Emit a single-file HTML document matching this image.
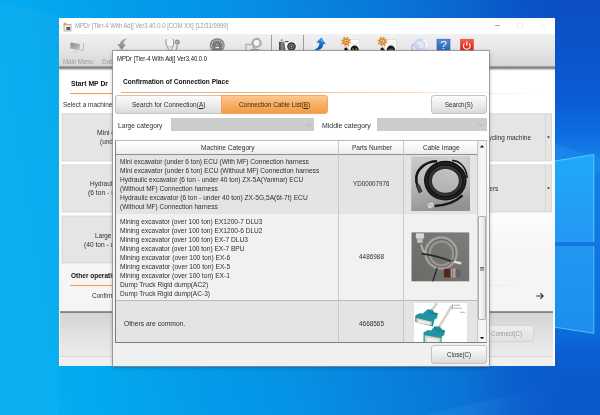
<!DOCTYPE html>
<html lang="en"><head><meta charset="utf-8"><title>MPDr</title>
<style>
html,body{margin:0;padding:0}
body{width:600px;height:415px;overflow:hidden;position:relative;font-family:"Liberation Sans",sans-serif;background:#0f86dc}
.a{position:absolute}
.tx{position:absolute;white-space:nowrap;line-height:10px;height:10px;transform-origin:0 50%;letter-spacing:0}
.mb{position:absolute;height:47.8px;box-sizing:border-box;background:#e5e5e4;border:.9px solid #d6d6d6}
.mb i{position:absolute;right:5.6px;top:0;bottom:0;width:.8px;background:#d2d2d2}
.mb b{position:absolute;right:1.4px;top:22.4px;width:0;height:0;border-left:1.6px solid transparent;border-right:1.6px solid transparent;border-top:2.2px solid #111}
.cb{height:12.5px;background:#ccc}
.cb svg{position:absolute;right:2.6px;top:4.4px}
#tl{position:absolute;left:0;top:0;width:600px;height:415px}
</style></head>
<body>
<svg class="a" style="left:0;top:0" width="600" height="415" viewBox="0 0 600 415">
<defs>
<linearGradient id="bg" gradientUnits="userSpaceOnUse" x1="0" y1="100" x2="600" y2="0">
<stop offset="0" stop-color="#02aef0"/><stop offset="0.14" stop-color="#03a5ed"/><stop offset="0.27" stop-color="#049ae9"/><stop offset="0.40" stop-color="#0592e5"/><stop offset="0.514" stop-color="#0885de"/><stop offset="0.645" stop-color="#0977d8"/><stop offset="0.757" stop-color="#0a68d0"/><stop offset="0.888" stop-color="#095bcb"/><stop offset="1" stop-color="#0a51c3"/>
</linearGradient>
<linearGradient id="rs" x1="0" y1="0" x2="0" y2="1">
<stop offset="0" stop-color="#0b4fc3"/><stop offset="0.041" stop-color="#0b50c4"/><stop offset="0.142" stop-color="#0c54cc"/><stop offset="0.243" stop-color="#0c5cd6"/><stop offset="0.319" stop-color="#0c6ce0"/><stop offset="0.378" stop-color="#1580e6"/><stop offset="0.80" stop-color="#0c6cdc"/><stop offset="0.842" stop-color="#0a60d4"/><stop offset="0.9" stop-color="#0b5acc"/><stop offset="1" stop-color="#0b58ca"/>
</linearGradient>
<linearGradient id="mh" gradientUnits="userSpaceOnUse" x1="470" y1="0" x2="556" y2="0"><stop offset="0" stop-color="#000"/><stop offset="1" stop-color="#fff"/></linearGradient>
<mask id="mk" maskUnits="userSpaceOnUse" x="0" y="0" width="600" height="415"><rect x="470" y="0" width="130" height="415" fill="url(#mh)"/></mask>
<linearGradient id="p1" x1="0" y1="0" x2="0" y2="1"><stop offset="0" stop-color="#1fa9f8"/><stop offset="1" stop-color="#2498f4"/></linearGradient>
<linearGradient id="p2" x1="0" y1="0" x2="0" y2="1"><stop offset="0" stop-color="#2297f2"/><stop offset="1" stop-color="#1d8eec"/></linearGradient>
</defs>
<rect width="600" height="415" fill="url(#bg)"/>
<polygon points="0,2 59,16 59,415 0,415" fill="#fff" opacity=".035"/>
<polygon points="425,415 600,374 600,415" fill="#3a90e8" opacity=".22"/>
<rect x="470" y="0" width="130" height="415" fill="url(#rs)" mask="url(#mk)"/>
<polygon points="554,143.2 600,158.6 600,172 594,172 594,154.5 554,161" fill="#1e8aec" opacity=".55"/>
<polygon points="555,161 593.8,154.5 593.8,242.2 555,242.2" fill="url(#p1)"/>
<polygon points="555,246 593.8,246 593.8,333.3 555,327.2" fill="url(#p2)"/>
<polyline points="555,161 593.8,154.5 593.8,242" fill="none" stroke="#55cdfc" stroke-width="1"/>
<polyline points="593.8,246 593.8,333.3 555,327.2" fill="none" stroke="#48c4f8" stroke-width="1"/>
</svg>
<div class="a" id="win" style="left:59px;top:18px;width:496px;height:348px;background:#fff;overflow:hidden">
 <div class="a" style="left:0;top:16px;width:496px;height:32.6px;background:linear-gradient(#f1f1f1 0,#e6e6e6 45%,#d5d5d5 100%)"></div>
 <div class="a" style="left:0;top:48.4px;width:496px;height:4.2px;background:linear-gradient(#b9b9b9 0,#848484 22%,#808080 42%,#b8b8b8 62%,#ececec 82%,#fff 100%)"></div>
 <div class="a" style="left:0;top:52.6px;width:496px;height:240.7px;background:linear-gradient(#fff 0,#fff 55%,#f6f6f6 75%,#f5f5f5 100%)"></div>
 <!-- heading lines -->
 <div class="a" style="left:11px;top:74.6px;width:470px;height:1.4px;background:linear-gradient(90deg,#f79646 0,#f9a55f 40%,#fde3cc 85%,rgba(255,255,255,0) 100%)"></div>
 <div class="a" style="left:11px;top:266.6px;width:470px;height:1.4px;background:linear-gradient(90deg,#f79646 0,#f9a55f 40%,#fde3cc 85%,rgba(255,255,255,0) 100%)"></div>
 <!-- machine buttons -->
 <svg class="a" style="left:0;top:0" width="496" height="348" viewBox="59 18 496 348">
 <g fill="#e5e5e4" stroke="#d5d5d5" stroke-width=".9">
 <rect x="62.2" y="113.8" width="242" height="47.1"/><rect x="62.2" y="164.9" width="242" height="47"/><rect x="62.2" y="216.1" width="242" height="46.8"/>
 <rect x="307" y="113.8" width="244.4" height="47.1"/><rect x="307" y="164.9" width="244.4" height="47"/>
 </g>
 <path d="M545.5 114V161M545.5 165V212" stroke="#d2d2d2" stroke-width=".8"/>
 <path d="M547.1 136.4H549.9L548.5 138.2ZM547.1 187.4H549.9L548.5 189.2Z" fill="#111"/>
 </svg>
 <!-- arrow -->
 <svg class="a" style="left:476px;top:273px" width="10" height="10" viewBox="0 0 10 10"><path d="M1.2 5H8M5.3 2.2L8.2 5L5.3 7.8" fill="none" stroke="#333" stroke-width="1.1"/></svg>
 <!-- bottom panel -->
 <div class="a" style="left:1px;top:292.6px;width:493.3px;height:2.2px;background:linear-gradient(#9a9a9a,#7c7c7c)"></div>
 <div class="a" style="left:1px;top:294.8px;width:493.3px;height:43.6px;background:linear-gradient(#d4d4d4 0,#e0e0e0 45%,#ebebeb 100%)"></div>
 <div class="a" style="left:1px;top:338.4px;width:493.3px;height:9.6px;background:#f0f0f0;border-top:0.8px solid #d8d8d8"></div>
 <!-- connect button -->
 <div class="a" style="left:425px;top:307px;width:50px;height:17px;border:0.8px solid #d4d4d4;border-radius:2.5px;background:linear-gradient(#eeeeee,#e0e0e0);box-sizing:border-box"></div>
 
 <!-- title icon -->
 <svg class="a" style="left:4px;top:3.5px" width="9" height="10" viewBox="0 0 9 10"><rect x="1" y="2.5" width="7" height="6.5" fill="#e9e9e9" stroke="#9a9a9a" stroke-width=".7"/><rect x="3.5" y="5" width="3.5" height="3" fill="#555"/><circle cx="2" cy="2" r="1.6" fill="#e8a050"/></svg>
 <!-- window controls -->
 <div class="a" style="left:435.7px;top:7.2px;width:5.6px;height:1px;background:#a6a6a6"></div>
 <div class="a" style="left:458px;top:4.7px;width:5.6px;height:5px;border:.8px solid #efefef;box-sizing:border-box"></div>
 <svg class="a" style="left:481px;top:4px" width="7" height="7" viewBox="0 0 7 7"><path d="M.8 .8L6.2 6.2M6.2 .8L.8 6.2" stroke="#eee" stroke-width=".8"/></svg>
 <!-- separators -->
 <div class="a" style="left:212px;top:17px;width:1px;height:31px;background:#9d9d9d"></div>
 <div class="a" style="left:244.3px;top:17px;width:1px;height:31px;background:#9d9d9d"></div>
 
<svg class="a" style="left:0;top:0" width="496" height="50" viewBox="59 18 496 50">
<defs>
<linearGradient id="gmon" x1="0" y1="0" x2="1" y2="1"><stop offset="0" stop-color="#777"/><stop offset="1" stop-color="#c4c4c4"/></linearGradient>
<linearGradient id="garr" x1="0" y1="0" x2="0" y2="1"><stop offset="0" stop-color="#b4b4b4"/><stop offset="1" stop-color="#808080"/></linearGradient>
<linearGradient id="gblu" x1="0" y1="0" x2="0" y2="1"><stop offset="0" stop-color="#2a8ee8"/><stop offset="1" stop-color="#0a4cb0"/></linearGradient>
<linearGradient id="gq" x1="0" y1="0" x2="0" y2="1"><stop offset="0" stop-color="#5a8fd6"/><stop offset=".5" stop-color="#3a76c4"/><stop offset="1" stop-color="#2f68b6"/></linearGradient>
<linearGradient id="gr" x1="0" y1="0" x2="0" y2="1"><stop offset="0" stop-color="#f3634c"/><stop offset=".5" stop-color="#ea3420"/><stop offset="1" stop-color="#de2412"/></linearGradient>
<linearGradient id="ggrip" x1="0" y1="0" x2="1" y2="0"><stop offset="0" stop-color="#3c3c3c"/><stop offset=".5" stop-color="#8a8a8a"/><stop offset="1" stop-color="#4a4a4a"/></linearGradient>
</defs>
<!-- main menu icon -->
<g opacity=".85">
<polygon points="70.6,42.6 79.9,44 79.6,50.4 70.3,48.6" fill="url(#gmon)"/>
<path d="M72.2 51.6L78.4 52.6" stroke="#d4d4d4" stroke-width="1.2"/>
<path d="M75.4 50L75.6 52" stroke="#cfcfcf" stroke-width="1.4"/>
<rect x="81.3" y="38" width="4.3" height="5.2" rx="1.5" fill="#f6f6f6" stroke="#cdcdcd" stroke-width=".5"/>
<path d="M83.6 43.2V49.4Q83.6 50.9 82 50.6L80 49.9" stroke="#ababab" fill="none" stroke-width=".9"/>
</g>
<!-- data download arrow -->
<path d="M127.7 38.2C122.6 38.6 120.2 41 119.8 44.3L117.1 44.1L121.6 49.8L126.1 44.6L123.5 44.5C123.7 42 125 39.8 127.7 38.2Z" fill="url(#garr)"/>
<path d="M116 50.2H128" stroke="#a0a0a0" stroke-width=".6"/>
<!-- stethoscope -->
<path d="M166.6 39C165 42.6 166.6 46.6 169.4 50.4L170.6 50.4C173.4 46.6 174.6 42.6 173 39" fill="#f5f5f5" stroke="#7e7e7e" stroke-width=".9"/>
<path d="M168 46.8L171.8 46.8" stroke="#999" stroke-width=".7"/>
<circle cx="177.3" cy="42.1" r="2.5" fill="#909090"/><circle cx="177.3" cy="42.1" r="1.1" fill="#c4c4c4"/>
<path d="M177.2 44.6L176.6 49.4L175.2 50.4" stroke="#808080" stroke-width=".9" fill="none"/>
<!-- gauge -->
<circle cx="217.2" cy="45.6" r="7.4" fill="#7a7a7a"/>
<path d="M212.2 48.6A5.7 5.7 0 1 1 222.2 48.6" fill="none" stroke="#e4e4e4" stroke-width="1.5" stroke-dasharray=".9 1.1"/>
<rect x="215.4" y="47" width="3.6" height="1.2" fill="#eee"/>
<path d="M216.4 43.8L217.6 45.6" stroke="#ddd" stroke-width=".8"/>
<!-- gear hook -->
<circle cx="256.6" cy="42.9" r="3.9" fill="none" stroke="#a9a9a9" stroke-width="2"/>
<circle cx="256.6" cy="42.9" r="4.9" fill="none" stroke="#b0b0b0" stroke-width=".9" stroke-dasharray=".9 .9"/>
<circle cx="256.6" cy="42.9" r="2.8" fill="#f4f4f4"/>
<path d="M246 50.4V44.6H252.4" fill="none" stroke="#b2b2b2" stroke-width="1.5"/>
<path d="M250.5 49.7H259.5" stroke="#8a8a8a" stroke-width="1.4" opacity=".8"/>
<path d="M252.6 46.4L255 49" stroke="#aaa" stroke-width="1.6"/>
<!-- camera -->
<rect x="284.6" y="40.9" width="12.4" height="9.8" fill="#f8f8f8" stroke="#dcdcdc" stroke-width=".5"/>
<polygon points="279,41.8 284.2,41.8 285.6,50.6 279,50.6" fill="url(#ggrip)"/>
<circle cx="291.5" cy="46.5" r="4.3" fill="#352d2d"/>
<circle cx="291.5" cy="46.5" r="2.5" fill="none" stroke="#8d8888" stroke-width="1"/>
<circle cx="291.5" cy="46.5" r="1" fill="#b8b4b4"/>
<rect x="285.2" y="41" width="2.8" height="1.2" fill="#4a4a4a"/>
<circle cx="288.6" cy="41.5" r=".6" fill="#49c0c0"/>
<circle cx="281.7" cy="40.1" r=".9" fill="#3f86d8"/>
<!-- blue arrow -->
<path d="M312.4 43.2Q313.8 41.6 315.8 42.6L315.6 46.4Q313.2 47.4 312.4 43.2Z" fill="#f6f6f6" opacity=".8"/>
<path d="M313.6 50.4C317.4 48.8 319.3 46.6 319.4 43L316.4 42.6L321.4 37.6L325.8 44.3L323.3 43.7C323.3 47.8 320.6 50.4 313.6 50.4Z" fill="url(#gblu)"/>
<path d="M321.3 39.6L322.6 42.2" stroke="#cfe6fb" stroke-width=".7"/>
<!-- orange gear icons -->
<g>
<rect x="348.4" y="39.6" width="11.4" height="11" fill="#fbfbfb" stroke="#cfcfcf" stroke-width=".5"/>
<path d="M351.5 43.6L354.6 45.2L358 42.8" stroke="#e4e4e4" stroke-width="1.2" fill="none"/>
<circle cx="346.1" cy="41.6" r="3.5" fill="#e28b2e"/>
<circle cx="346.1" cy="41.6" r="4.2" fill="none" stroke="#e6913e" stroke-width="1.5" stroke-dasharray="1.7 1.6"/>
<circle cx="346.1" cy="41.5" r="1.45" fill="#ececec"/><circle cx="346.1" cy="41.6" r=".75" fill="#3a3a3a"/>
<path d="M344.3 50.7V48.4L346.2 47.2L349 50.7Z" fill="#1c1412"/>
<path d="M350.4 50.7C350.4 47.2 352.4 45.6 354.6 45.6C356.8 45.6 358.8 47.2 358.8 50.7Z" fill="#15181c"/>
</g>
<path d="M352.6 48L353.6 50.4M356.6 48L355.6 50.4" stroke="#e8902c" stroke-width=".9"/>
<g transform="translate(36.3 0)">
<rect x="348.4" y="39.6" width="11.4" height="11" fill="#fbfbfb" stroke="#cfcfcf" stroke-width=".5"/>
<path d="M351.5 43.6L354.6 45.2L358 42.8" stroke="#e4e4e4" stroke-width="1.2" fill="none"/>
<circle cx="346.1" cy="41.6" r="3.5" fill="#e28b2e"/>
<circle cx="346.1" cy="41.6" r="4.2" fill="none" stroke="#e6913e" stroke-width="1.5" stroke-dasharray="1.7 1.6"/>
<circle cx="346.1" cy="41.5" r="1.45" fill="#ececec"/><circle cx="346.1" cy="41.6" r=".75" fill="#3a3a3a"/>
<path d="M344.3 50.7V48.4L346.2 47.2L349 50.7Z" fill="#1c1412"/>
<path d="M350.4 50.7C350.4 47.2 352.4 45.6 354.6 45.6C356.8 45.6 358.8 47.2 358.8 50.7Z" fill="#15181c"/>
</g>
<path d="M389.2 48.6L390 50.2M391 48.2V50.2M392.8 48.6L392 50.2" stroke="#4aa0d8" stroke-width=".7"/>
<!-- pale gears -->
<circle cx="415.4" cy="47.4" r="3.4" fill="none" stroke="#b7a6dc" stroke-width="1.3" opacity=".85"/>
<circle cx="420.3" cy="44.7" r="5" fill="#e6e8ee" stroke="#c4d5f2" stroke-width="2.6"/>
<circle cx="420.3" cy="44.7" r="6.5" fill="none" stroke="#d2e0f8" stroke-width="1.1" stroke-dasharray="1.2 1.1"/>
<path d="M423 39.4A5.8 5.8 0 0 1 425.8 47.4" fill="none" stroke="#fff" stroke-width="1.6"/>
<path d="M416.6 50.4A3.6 3.6 0 0 0 417.4 44.6" fill="none" stroke="#b7a6dc" stroke-width="1" opacity=".7"/>
<!-- help -->
<rect x="437" y="39.2" width="13" height="11.6" fill="url(#gq)" stroke="#2c5ea8" stroke-width=".6"/>
<!-- power -->
<rect x="460.3" y="39.2" width="13.1" height="11.6" fill="url(#gr)" stroke="#d8412c" stroke-width=".5"/>
<path d="M464.6 43.3A3.4 3.4 0 1 0 469 43.3" fill="none" stroke="#fff" stroke-width="1.1"/>
<path d="M466.8 41.2V45.8" stroke="#fff" stroke-width="1.1"/>
</svg>
<span class="a" style="left:378px;top:20.6px;width:13px;height:12px;line-height:12px;text-align:center;font-size:11.5px;font-weight:normal;color:#fff">?</span>


</div>

<div id="tl">
<span class="tx" style="left:75.0px;top:20.8px;font-size:7.2px;font-weight:normal;color:#9a9a9a;transform:scaleX(0.8229)">MPDr [Tier-4 With Adj] Ver3.40.0.0 [COM XX] [12/31/9999]</span>
<span class="tx" style="left:62.6px;top:57.0px;font-size:7.2px;font-weight:normal;color:#9c9c9c;transform:scaleX(0.8436)">Main Menu</span>
<span class="tx" style="left:71.0px;top:78.5px;font-size:7.4px;font-weight:bold;color:#111;transform:scaleX(0.9221)">Start MP Dr</span>
<span class="tx" style="left:71.4px;top:270.6px;font-size:7.4px;font-weight:bold;color:#111;transform:scaleX(0.8839)">Other operation</span>
<span class="tx" style="left:102.0px;top:57.0px;font-size:7.2px;font-weight:normal;color:#9c9c9c;transform:scaleX(0.9000)">Data Download</span>
<span class="tx" style="left:63.0px;top:100.2px;font-size:7.4px;font-weight:normal;color:#2e2e2e;transform:scaleX(0.8700)">Select a machine type</span>
<span class="tx" style="left:97.0px;top:128.1px;font-size:7.4px;font-weight:normal;color:#2e2e2e;transform:scaleX(0.9200)">Mini excavator</span>
<span class="tx" style="left:100.3px;top:137.1px;font-size:7.4px;font-weight:normal;color:#2e2e2e;transform:scaleX(0.8700)">(under 6 ton)</span>
<span class="tx" style="left:90.0px;top:179.1px;font-size:7.4px;font-weight:normal;color:#2e2e2e;transform:scaleX(0.8700)">Hydraulic excavator</span>
<span class="tx" style="left:87.7px;top:188.1px;font-size:7.4px;font-weight:normal;color:#2e2e2e;transform:scaleX(0.9100)">(6 ton - under 40 ton)</span>
<span class="tx" style="left:95.0px;top:231.0px;font-size:7.4px;font-weight:normal;color:#2e2e2e;transform:scaleX(0.8700)">Large excavator</span>
<span class="tx" style="left:84.0px;top:240.0px;font-size:7.4px;font-weight:normal;color:#2e2e2e;transform:scaleX(0.9000)">(40 ton - under 100 ton)</span>
<span class="tx" style="left:92.3px;top:291.2px;font-size:7.4px;font-weight:normal;color:#2e2e2e;transform:scaleX(0.8500)">Confirmation of Connection Place</span>
<span class="tx" style="left:476.5px;top:133.1px;font-size:7.4px;font-weight:normal;color:#2e2e2e;transform:scaleX(0.8700)">Recycling machine</span>
<span class="tx" style="left:478.7px;top:183.9px;font-size:7.4px;font-weight:normal;color:#2e2e2e;transform:scaleX(0.8700)">Others</span>
<span class="tx" style="left:491.0px;top:328.5px;font-size:7.4px;font-weight:normal;color:#9a9a9a;transform:scaleX(0.8202)">Connect(C)</span>
</div>

<div class="a" id="dlg" style="left:112.5px;top:50.5px;width:376.8px;height:315.5px;background:#fff;box-shadow:0 0 0 .8px #8f8f8f,0 1px 4px rgba(0,0,0,.35);overflow:hidden">
 <div class="a" style="left:0;top:80px;width:377px;height:236px;background:linear-gradient(#fff,#f0f0f0 88%)"></div>
 <div class="a" style="left:8.6px;top:41.2px;width:368px;height:1.3px;background:linear-gradient(90deg,#f9a464 0,#f9ad72 35%,#fcd3b2 70%,#fef1e6 100%)"></div>
 <!-- tabs -->
 <div class="a" style="left:2.5px;top:44.8px;width:106.5px;height:18.3px;box-sizing:border-box;border:.9px solid #c4c4c4;border-right:0;border-radius:3px 0 0 3px;background:linear-gradient(#fbfbfb 0,#efefef 45%,#dadada 100%)"></div>
 <div class="a" style="left:108.6px;top:44.8px;width:106.6px;height:18.3px;box-sizing:border-box;border:.9px solid #f0a860;border-radius:0 3px 3px 0;background:linear-gradient(#fcc990 0,#f9b068 45%,#f39c44 100%)"></div>
 <div class="a" style="left:318.6px;top:44.8px;width:55.6px;height:18.3px;box-sizing:border-box;border:.9px solid #c4c4c4;border-radius:3px;background:linear-gradient(#fbfbfb 0,#efefef 45%,#dadada 100%)"></div>
 <!-- underline accel -->
 <!-- combos -->
 <div class="a cb" style="left:58.4px;top:67.7px;width:143.6px"><svg width="6" height="4" viewBox="0 0 6 4"><path d="M.5 .6L3 3.1L5.5 .6" fill="none" stroke="#b0b0b0" stroke-width=".8"/></svg></div>
 <div class="a cb" style="left:264.3px;top:67.7px;width:110px"><svg width="6" height="4" viewBox="0 0 6 4"><path d="M.5 .6L3 3.1L5.5 .6" fill="none" stroke="#b0b0b0" stroke-width=".8"/></svg></div>
 <!-- table -->
 <div class="a" id="tbl" style="left:2.5px;top:89.6px;width:372px;height:202.7px;box-sizing:border-box;border:.9px solid #7e7e7e;border-top-color:#b9b9b9;border-right-color:#c4c4c4;background:#f1f1f1;overflow:hidden">
  <div class="a" style="left:0;top:0;width:361px;height:13px;background:linear-gradient(#fff,#f8f8f8 45%,#ececec)"></div>
  <div class="a" style="left:0;top:13px;width:361px;height:.8px;background:#8e8e8e"></div>
  <div class="a" style="left:0;top:13.8px;width:361px;height:58.7px;background:#e4e4e3"></div>
  <div class="a" style="left:0;top:72.5px;width:361px;height:.8px;background:#c6c6c6"></div>
  <div class="a" style="left:0;top:73.3px;width:361px;height:85.7px;background:#f1f1f1"></div>
  <div class="a" style="left:0;top:159px;width:361px;height:.8px;background:#b9b9b9"></div>
  <div class="a" style="left:0;top:159.8px;width:361px;height:42px;background:#e4e4e3"></div>
  <div class="a" style="left:222.2px;top:0;width:.8px;height:202px;background:#c9c9c9"></div>
  <div class="a" style="left:287.2px;top:0;width:.8px;height:202px;background:#c9c9c9"></div>
  <div class="a" style="left:360.8px;top:0;width:.8px;height:202px;background:#c9c9c9"></div>
  <!-- scrollbar -->
  <div class="a" style="left:361.6px;top:0;width:8.8px;height:202px;background:linear-gradient(90deg,#ededed,#f6f6f6 40%,#f4f4f4)"></div>
  <div class="a" style="left:362.4px;top:74.6px;width:7.4px;height:104.6px;box-sizing:border-box;border:.8px solid #adadad;border-radius:1.2px;background:linear-gradient(90deg,#fbfbfb,#e2e2e2)"></div>
  <div class="a" style="left:364.4px;top:125.6px;width:3.2px;height:.7px;background:#777;box-shadow:0 1.3px 0 #777,0 2.6px 0 #777"></div>
  <svg class="a" style="left:363.9px;top:4.2px" width="4" height="2.6" viewBox="0 0 4 2.6"><path d="M0 2.6L2 0L4 2.6Z" fill="#111"/></svg>
  <svg class="a" style="left:363.9px;top:195.8px" width="4" height="2.6" viewBox="0 0 4 2.6"><path d="M0 0L2 2.6L4 0Z" fill="#111"/></svg>
  
<svg class="a" style="left:0;top:0" width="361" height="201" viewBox="115.9 141.0 361 201">
<defs>
<linearGradient id="ph1" x1="0" y1="0" x2=".35" y2="1"><stop offset="0" stop-color="#cbcbcb"/><stop offset=".5" stop-color="#b7b7b7"/><stop offset="1" stop-color="#929292"/></linearGradient>
<radialGradient id="ph1b" cx=".75" cy=".2" r=".7"><stop offset="0" stop-color="#dcdcdc" stop-opacity=".9"/><stop offset="1" stop-color="#c0c0c0" stop-opacity="0"/></radialGradient>
<linearGradient id="ph2" x1="0" y1="1" x2="1" y2="0"><stop offset="0" stop-color="#696a66"/><stop offset="1" stop-color="#7d7e7a"/></linearGradient>
<clipPath id="c1"><rect x="411" y="156.3" width="59" height="54.8"/></clipPath>
<clipPath id="c2"><rect x="411.2" y="232.2" width="58.2" height="49.4"/></clipPath>
<clipPath id="c3"><rect x="413.8" y="303" width="53" height="40"/></clipPath>
<filter id="bl" x="-5%" y="-5%" width="110%" height="110%"><feGaussianBlur stdDeviation=".45"/></filter>
<filter id="bl2" x="-5%" y="-5%" width="110%" height="110%"><feGaussianBlur stdDeviation=".35"/></filter>
</defs>
<!-- photo 1 -->
<g clip-path="url(#c1)">
<rect x="411" y="156.3" width="59" height="54.8" fill="url(#ph1)"/>
<rect x="411" y="156.3" width="59" height="54.8" fill="url(#ph1b)"/>
<g filter="url(#bl)">
<ellipse cx="445.2" cy="180.6" rx="18.6" ry="17.1" fill="none" stroke="#161616" stroke-width="5.4"/>
<ellipse cx="445.3" cy="180.9" rx="15" ry="13.4" fill="none" stroke="#2e2e2e" stroke-width="3.2"/>
<ellipse cx="445.4" cy="181.2" rx="12.6" ry="11" fill="#b5b5b5" opacity=".55"/>
<path d="M437 161.2C427 161 417.4 168 416.2 177C415.8 181 416.4 183.6 417.6 186" fill="none" stroke="#161616" stroke-width="2.6"/>
<path d="M452 160.6C460 160.4 466.6 168 467 178" fill="none" stroke="#1c1c1c" stroke-width="1.6"/>
<polygon points="415.6,186 419.4,184.6 422.4,191.6 418.8,193.4" fill="#3c3c3c"/>
<path d="M462.4 195.4C456 201.4 447 205.4 434.4 206" fill="none" stroke="#151515" stroke-width="2.4"/>
<polygon points="427.2,203.4 432.6,202.6 434.2,206.8 428.6,208.4" fill="#d8d8d8"/>
<path d="M428 204L433.4 207" stroke="#8a8a8a" stroke-width=".7"/>
<ellipse cx="445.2" cy="180.7" rx="16.2" ry="14.6" fill="none" stroke="#4a4a4a" stroke-width=".6" opacity=".8"/>
<ellipse cx="445.3" cy="180.9" rx="19" ry="17.6" fill="none" stroke="#484848" stroke-width=".6" opacity=".7"/>
</g>
</g>
<!-- photo 2 -->
<g clip-path="url(#c2)">
<rect x="411.2" y="232.2" width="58.2" height="49.4" fill="url(#ph2)"/>
<g filter="url(#bl2)">
<ellipse cx="441" cy="253" rx="15.4" ry="15.4" fill="none" stroke="#a2a39f" stroke-width="2.6"/>
<ellipse cx="441.4" cy="253.4" rx="11.8" ry="12" fill="none" stroke="#959692" stroke-width="2.4"/>
<ellipse cx="441.2" cy="253.2" rx="13.9" ry="14" fill="none" stroke="#5a5b58" stroke-width=".7"/>
<path d="M421 244.4C421.6 248 422.6 250.6 425 253" fill="none" stroke="#b4b5b1" stroke-width="1.8"/>
<rect x="415.8" y="233.4" width="8" height="5" fill="#dcdcda"/>
<rect x="417" y="238.4" width="5.6" height="4.4" fill="#c2c2bf"/>
<path d="M415.4 236.4H424.4" stroke="#c6c6c2" stroke-width=".6"/>
<path d="M421.6 253.6C430 255 441 256.6 450.8 261.4" fill="none" stroke="#262626" stroke-width="1.9"/>
<path d="M446 258.6L455 261.4" stroke="#6a4a44" stroke-width="1"/>
<polygon points="454,260.4 461.4,262.2 460.8,264.6 453.6,262.8" fill="#e4e4e2"/>
<path d="M437.2 267.6L432.6 281.6" stroke="#161616" stroke-width="1.1"/>
<rect x="443.8" y="268.8" width="7" height="8.6" rx="1.2" fill="#58261f"/>
<rect x="450.6" y="268.6" width="5" height="9" rx="1.6" fill="#b3a59d"/>
<rect x="455.4" y="269.4" width="5.2" height="7.6" rx="2" fill="#62606e"/>
<path d="M447 269.6V277M452.6 269V277.2" stroke="#40201c" stroke-width=".6" opacity=".7"/>
</g>
</g>
<!-- photo 3 -->
<g clip-path="url(#c3)">
<rect x="413.8" y="303" width="53" height="40" fill="#fff"/>
<g filter="url(#bl2)">
<path d="M431.6 310.4L437 303" stroke="#d7d1c4" stroke-width="2.6"/>
<path d="M439.4 326L451.8 306" stroke="#d9d3c6" stroke-width="2.6"/>
<polygon points="415.2,315.6 419.4,313.2 422.6,313.6 427.4,309.4 431.8,309.4 434.6,312.6 437.8,313.2 436.8,318.2 434.4,319.6 432.8,326.6 415.2,322" fill="#2493a0"/>
<polygon points="416.3,318 431.8,321.8 431.3,325.6 416.3,322.8" fill="#d6d0c0"/>
<polygon points="418.2,319.8 429.6,322.6 429.4,324.6 418.2,322.4" fill="#f2efe6"/>
<path d="M427.4 309.8L431.6 313.6L437.6 314" stroke="#136c78" stroke-width=".8" fill="none"/>
<polygon points="423.4,332.4 427.8,330 431,330.4 434.2,326.6 439.6,326.2 442,329.6 445,330.4 444,335.2 441.8,336.6 441.2,343 423.4,343" fill="#2493a0"/>
<polygon points="424.6,335.2 440.6,338 440.2,343 424.6,343" fill="#d6d0c0"/>
<polygon points="426.6,337.2 438.6,339.4 438.4,343 426.6,343" fill="#f2efe6"/>
<path d="M434 327L438.4 331L444.4 331.4" stroke="#136c78" stroke-width=".8" fill="none"/>
<rect x="452" y="304.2" width=".7" height="5" fill="#5a80d2"/>
<path d="M453.6 305.2H460M453.6 308.2H461.6M460.2 312.3H464.8" stroke="#9a9a9a" stroke-width=".8"/>
</g>
</g>
</svg>

 </div>
 <!-- close -->
 <div class="a" style="left:318.6px;top:294.9px;width:55.6px;height:18.3px;box-sizing:border-box;border:.9px solid #c4c4c4;border-radius:3px;background:linear-gradient(#fbfbfb 0,#efefef 45%,#dadada 100%)"></div>
</div>

<div id="tl2" class="a" style="left:0;top:0">
<span class="tx" style="left:116.6px;top:53.8px;font-size:7.2px;font-weight:normal;color:#111;transform:scaleX(0.8183)">MPDr [Tier-4 With Adj] Ver3.40.0.0</span>
<span class="tx" style="left:122.8px;top:77.4px;font-size:7.4px;font-weight:bold;color:#111;transform:scaleX(0.8885)">Confirmation of Connection Place</span>
<span class="tx" style="left:131.6px;top:100.2px;font-size:7.4px;font-weight:normal;color:#2e2e2e;transform:scaleX(0.8802)">Search for Connection(<u>A</u>)</span>
<span class="tx" style="left:238.8px;top:100.2px;font-size:7.4px;font-weight:normal;color:#3a2a10;transform:scaleX(0.8665)">Connection Cable List(<u>B</u>)</span>
<span class="tx" style="left:445.0px;top:100.2px;font-size:7.4px;font-weight:normal;color:#2e2e2e;transform:scaleX(0.8323)">Search(S)</span>
<span class="tx" style="left:117.8px;top:121.1px;font-size:7.4px;font-weight:normal;color:#2e2e2e;transform:scaleX(0.9004)">Large category</span>
<span class="tx" style="left:321.8px;top:121.1px;font-size:7.4px;font-weight:normal;color:#2e2e2e;transform:scaleX(0.9354)">Middle category</span>
<span class="tx" style="left:200.9px;top:143.4px;font-size:7.4px;font-weight:normal;color:#2e2e2e;transform:scaleX(0.8936)">Machine Category</span>
<span class="tx" style="left:351.7px;top:143.4px;font-size:7.4px;font-weight:normal;color:#2e2e2e;transform:scaleX(0.8795)">Parts Number</span>
<span class="tx" style="left:422.5px;top:143.4px;font-size:7.4px;font-weight:normal;color:#2e2e2e;transform:scaleX(0.8710)">Cable Image</span>
<span class="tx" style="left:119.7px;top:156.5px;font-size:7.4px;font-weight:normal;color:#2e2e2e;transform:scaleX(0.8912)">Mini excavator (under 6 ton) ECU (With MF) Connection harness</span>
<span class="tx" style="left:119.7px;top:165.5px;font-size:7.4px;font-weight:normal;color:#2e2e2e;transform:scaleX(0.8964)">Mini excavator (under 6 ton) ECU (Without MF) Connection harness</span>
<span class="tx" style="left:119.7px;top:174.5px;font-size:7.4px;font-weight:normal;color:#2e2e2e;transform:scaleX(0.8833)">Hydraulic excavator (6 ton - under 40 ton) ZX-5A(Yanmar) ECU</span>
<span class="tx" style="left:119.7px;top:183.6px;font-size:7.4px;font-weight:normal;color:#2e2e2e;transform:scaleX(0.8842)">(Without MF) Connection harness</span>
<span class="tx" style="left:119.7px;top:192.6px;font-size:7.4px;font-weight:normal;color:#2e2e2e;transform:scaleX(0.8995)">Hydraulic excavator (6 ton - under 40 ton) ZX-5G,5A(6t-7t) ECU</span>
<span class="tx" style="left:119.7px;top:201.6px;font-size:7.4px;font-weight:normal;color:#2e2e2e;transform:scaleX(0.8842)">(Without MF) Connection harness</span>
<span class="tx" style="left:119.7px;top:216.7px;font-size:7.4px;font-weight:normal;color:#2e2e2e;transform:scaleX(0.8917)">Mining excavator (over 100 ton) EX1200-7 DLU3</span>
<span class="tx" style="left:119.7px;top:225.7px;font-size:7.4px;font-weight:normal;color:#2e2e2e;transform:scaleX(0.8917)">Mining excavator (over 100 ton) EX1200-6 DLU2</span>
<span class="tx" style="left:119.7px;top:234.8px;font-size:7.4px;font-weight:normal;color:#2e2e2e;transform:scaleX(0.8921)">Mining excavator (over 100 ton) EX-7 DLU3</span>
<span class="tx" style="left:119.7px;top:243.8px;font-size:7.4px;font-weight:normal;color:#2e2e2e;transform:scaleX(0.8914)">Mining excavator (over 100 ton) EX-7 BPU</span>
<span class="tx" style="left:119.7px;top:252.9px;font-size:7.4px;font-weight:normal;color:#2e2e2e;transform:scaleX(0.9010)">Mining excavator (over 100 ton) EX-6</span>
<span class="tx" style="left:119.7px;top:261.9px;font-size:7.4px;font-weight:normal;color:#2e2e2e;transform:scaleX(0.9010)">Mining excavator (over 100 ton) EX-5</span>
<span class="tx" style="left:119.7px;top:270.9px;font-size:7.4px;font-weight:normal;color:#2e2e2e;transform:scaleX(0.8977)">Mining excavator (over 100 ton) EX-1</span>
<span class="tx" style="left:119.7px;top:280.0px;font-size:7.4px;font-weight:normal;color:#2e2e2e;transform:scaleX(0.8937)">Dump Truck Rigid dump(AC2)</span>
<span class="tx" style="left:119.7px;top:289.0px;font-size:7.4px;font-weight:normal;color:#2e2e2e;transform:scaleX(0.8907)">Dump Truck Rigid dump(AC-3)</span>
<span class="tx" style="left:123.5px;top:318.6px;font-size:7.4px;font-weight:normal;color:#2e2e2e;transform:scaleX(0.9098)">Others are common.</span>
<span class="tx" style="left:353.0px;top:179.2px;font-size:7.4px;font-weight:normal;color:#2e2e2e;transform:scaleX(0.8458)">YD00007976</span>
<span class="tx" style="left:358.5px;top:251.6px;font-size:7.4px;font-weight:normal;color:#2e2e2e;transform:scaleX(0.8686)">4486988</span>
<span class="tx" style="left:358.5px;top:319.0px;font-size:7.4px;font-weight:normal;color:#2e2e2e;transform:scaleX(0.8686)">4668565</span>
<span class="tx" style="left:446.5px;top:349.5px;font-size:7.4px;font-weight:normal;color:#2e2e2e;transform:scaleX(0.8232)">Close(C)</span>
</div>
</body></html>
